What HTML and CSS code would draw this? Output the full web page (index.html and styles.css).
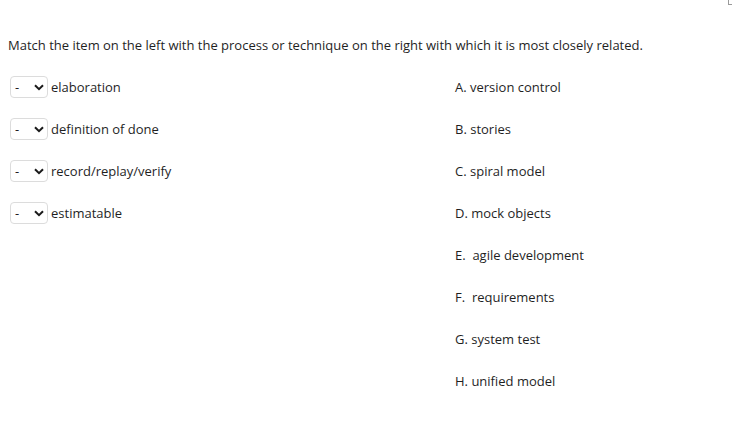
FILE: index.html
```html
<!DOCTYPE html>
<html lang="en">

<head>
    <meta charset="UTF-8">
    <meta name="viewport" content="width=device-width, initial-scale=1.0">
    <title>Matching question</title>
    <link rel="stylesheet" href="styles.css">
</head>

<body>

    <span class="corner"></span>

    <div class="question">
        <p class="prompt">Match the item on the left with the process or technique on the right with which it is most closely related.</p>

        <div class="columns">
            <div class="left">
                <div class="row">
                    <label class="pick">
                        <select>
                            <option>-</option>
                        </select>
                        <svg class="chev" viewBox="0 0 10 7" width="10" height="7"><path d="M1 1.2 5 5.2 9 1.2" fill="none" stroke="#1a1a1a" stroke-width="2"/></svg>
                    </label>
                    <span>elaboration</span>
                </div>
                <div class="row">
                    <label class="pick">
                        <select>
                            <option>-</option>
                        </select>
                        <svg class="chev" viewBox="0 0 10 7" width="10" height="7"><path d="M1 1.2 5 5.2 9 1.2" fill="none" stroke="#1a1a1a" stroke-width="2"/></svg>
                    </label>
                    <span>definition of done</span>
                </div>
                <div class="row">
                    <label class="pick">
                        <select>
                            <option>-</option>
                        </select>
                        <svg class="chev" viewBox="0 0 10 7" width="10" height="7"><path d="M1 1.2 5 5.2 9 1.2" fill="none" stroke="#1a1a1a" stroke-width="2"/></svg>
                    </label>
                    <span>record/replay/verify</span>
                </div>
                <div class="row">
                    <label class="pick">
                        <select>
                            <option>-</option>
                        </select>
                        <svg class="chev" viewBox="0 0 10 7" width="10" height="7"><path d="M1 1.2 5 5.2 9 1.2" fill="none" stroke="#1a1a1a" stroke-width="2"/></svg>
                    </label>
                    <span>estimatable</span>
                </div>
            </div>

            <div class="right">
                <div class="row">A. version control</div>
                <div class="row">B. stories</div>
                <div class="row">C. spiral model</div>
                <div class="row">D. mock objects</div>
                <div class="row">E. &nbsp;agile development</div>
                <div class="row">F. &nbsp;requirements</div>
                <div class="row">G. system test</div>
                <div class="row">H. unified model</div>
            </div>
        </div>
    </div>

</body>

</html>
```

FILE: styles.css
```css
*{
    margin: 0;
    padding: 0;
    box-sizing: border-box;
}
body{
    background: #FFFFFF;
    font-family: "Open Sans", Arial, sans-serif;
    font-size: 13px;
    color: #1f1f1f;
}
.corner{
    position: absolute;
    top: 0;
    right: 3px;
    width: 4px;
    height: 5px;
    border-left: 1px solid #9a9a9a;
    border-bottom: 1px solid #9a9a9a;
}
.question{
    padding: 36px 8px 0 8px;
}
.prompt{
    line-height: 18px;
}
.columns{
    display: grid;
    grid-template-columns: 447px 1fr;
    margin-top: 12px;
}
.row{
    height: 42px;
    display: flex;
    align-items: center;
    gap: 3px;
}
.left .row{
    padding-left: 2px;
}
.pick{
    position: relative;
    display: inline-block;
    width: 38px;
    height: 22px;
}
select{
    appearance: none;
    -webkit-appearance: none;
    width: 38px;
    height: 22px;
    border: 1px solid #dcdcdc;
    border-radius: 4px;
    background: #FFFFFF;
    font-family: inherit;
    font-size: 13px;
    color: #1f1f1f;
    padding: 0 0 0 4px;
    outline: none;
}
.chev{
    position: absolute;
    top: 8px;
    left: 24px;
    pointer-events: none;
}
```
